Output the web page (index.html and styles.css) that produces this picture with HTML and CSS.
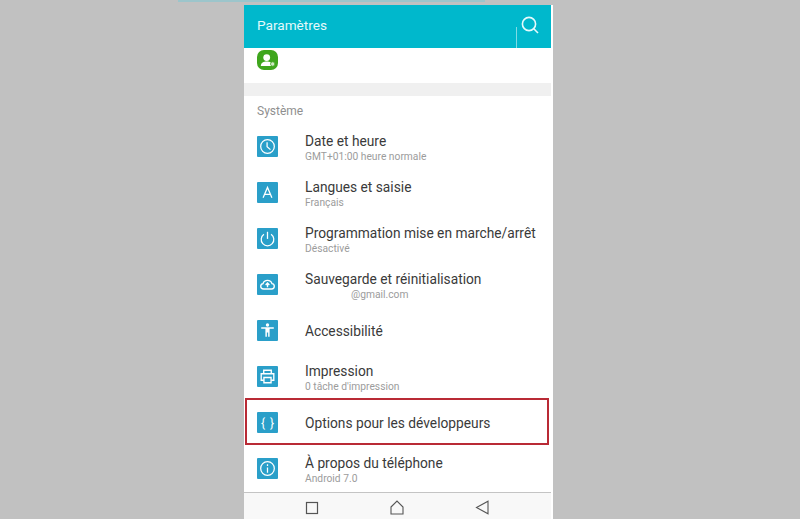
FILE: index.html
```html
<!DOCTYPE html>
<html lang="fr">
<head>
    <meta charset="UTF-8">
    <title>Paramètres</title>
    <link rel="stylesheet" href="styles.css">
</head>
<body>
    <div class="top-line"></div>
    <div class="phone">
        <header class="app-bar">
            <span class="app-title">Paramètres</span>
            <span class="app-seam"></span>
            <svg class="search-icon" width="20" height="20" viewBox="0 0 20 20" fill="none" stroke="#e6fafc" stroke-width="1.6">
                <circle cx="9" cy="9" r="6.6"/>
                <path d="M13.8 13.8 L18 18"/>
            </svg>
        </header>
        <div class="account-row">
            <span class="account-icon">
                <svg width="21" height="20" viewBox="0 0 21 20">
                    <circle cx="9.7" cy="7.6" r="3.4" fill="#fff"/>
                    <path d="M3.8 16 C4 12.6 6.6 11.6 9.7 11.6 C12.8 11.6 15.4 12.6 15.6 16 Z" fill="#fff"/>
                    <circle cx="15.7" cy="14" r="2.2" fill="#cfe9c4" stroke="#3fa61d" stroke-width="0.8"/>
                </svg>
            </span>
        </div>
        <div class="band"></div>
        <div class="section-title">Système</div>

        <div class="row">
            <span class="row-icon">
                <svg width="21" height="21" viewBox="0 0 20 20" fill="none" stroke="#fff" stroke-width="1.2">
                    <circle cx="10" cy="10" r="6.5"/>
                    <path d="M9.6 6 V10.2 L12.8 13"/>
                </svg>
            </span>
            <div class="row-text">
                <div class="row-title">Date et heure</div>
                <div class="row-sub">GMT+01:00 heure normale</div>
            </div>
        </div>
        <div class="row">
            <span class="row-icon">
                <svg width="21" height="21" viewBox="0 0 20 20" fill="none" stroke="#fff" stroke-width="1.2">
                    <path d="M5.8 15 L10 5.2 L14.2 15 M7.2 11.8 H12.8"/>
                </svg>
            </span>
            <div class="row-text">
                <div class="row-title">Langues et saisie</div>
                <div class="row-sub">Français</div>
            </div>
        </div>
        <div class="row">
            <span class="row-icon">
                <svg width="21" height="21" viewBox="0 0 20 20" fill="none" stroke="#fff" stroke-width="1.2">
                    <path d="M6.6 6 A6 6 0 1 0 13.4 6"/>
                    <path d="M10 3.6 V10.4"/>
                </svg>
            </span>
            <div class="row-text">
                <div class="row-title">Programmation mise en marche/arrêt</div>
                <div class="row-sub">Désactivé</div>
            </div>
        </div>
        <div class="row">
            <span class="row-icon">
                <svg width="21" height="21" viewBox="0 0 20 20" fill="none" stroke="#fff" stroke-width="1.5">
                    <g transform="translate(1.5 1.5) scale(.85)">
                        <path d="M5.6 15 C3.4 15 2.4 13.4 2.4 12 C2.4 10.4 3.6 9.2 5 9 C5.6 6.8 7.6 5.4 10 5.4 C12.6 5.4 14.4 7 15 9 C16.6 9.2 17.6 10.4 17.6 12 C17.6 13.6 16.4 15 14.6 15 Z"/>
                        <path d="M10 13.2 V8.6 M7.9 10.6 L10 8.4 L12.1 10.6"/>
                    </g>
                </svg>
            </span>
            <div class="row-text">
                <div class="row-title">Sauvegarde et réinitialisation</div>
                <div class="row-sub row-sub-mail">@gmail.com</div>
            </div>
        </div>
        <div class="row">
            <span class="row-icon">
                <svg width="21" height="21" viewBox="0 0 20 20" fill="#fff">
                    <circle cx="10" cy="4.8" r="1.6"/>
                    <path d="M4 7 H16 V8.4 H12 V16 H10.6 V12 H9.4 V16 H8 V8.4 H4 Z"/>
                </svg>
            </span>
            <div class="row-text">
                <div class="row-title">Accessibilité</div>
            </div>
        </div>
        <div class="row">
            <span class="row-icon">
                <svg width="21" height="21" viewBox="0 0 20 20" fill="none" stroke="#fff" stroke-width="1.3">
                    <path d="M6.4 7 V4 H13.6 V7"/>
                    <path d="M6.4 13.6 H4 V7.4 H16 V13.6 H13.6"/>
                    <path d="M6.6 11 H13.4 V16 H6.6 Z"/>
                </svg>
            </span>
            <div class="row-text">
                <div class="row-title">Impression</div>
                <div class="row-sub">0 tâche d'impression</div>
            </div>
        </div>
        <div class="row">
            <span class="row-icon row-icon-text">{ }</span>
            <div class="row-text">
                <div class="row-title">Options pour les développeurs</div>
            </div>
            <span class="marker"></span>
        </div>
        <div class="row">
            <span class="row-icon">
                <svg width="21" height="21" viewBox="0 0 20 20" fill="none" stroke="#fff" stroke-width="1.2">
                    <circle cx="10" cy="10" r="6.5"/>
                    <path d="M10 9 V14 M10 6 V7.6"/>
                </svg>
            </span>
            <div class="row-text">
                <div class="row-title">À propos du téléphone</div>
                <div class="row-sub">Android 7.0</div>
            </div>
        </div>

        <nav class="nav-bar">
            <svg width="14" height="14" viewBox="0 0 14 14" fill="none" stroke="#555" stroke-width="1.2">
                <rect x="1.5" y="1.5" width="11" height="11"/>
            </svg>
            <svg width="16" height="15" viewBox="0 0 16 15" fill="none" stroke="#555" stroke-width="1.1">
                <path d="M2 7 L8 1 L14 7 V14 H2 Z"/>
            </svg>
            <svg width="14" height="15" viewBox="0 0 14 15" fill="none" stroke="#555" stroke-width="1.1">
                <path d="M13 1.2 V13.8 L1.5 7.5 Z"/>
            </svg>
        </nav>
    </div>
</body>
</html>
```

FILE: styles.css
```css
html, body {
    height: 519px;
    overflow: hidden;
}
body {
    margin: 0;
    background: #c1c1c1;
    font-family: Roboto, "Liberation Sans", sans-serif;
}
.top-line {
    width: 307px;
    height: 2px;
    margin-left: 178px;
    background: #9cc5cb;
}
.phone {
    position: relative;
    width: 307px;
    height: 514px;
    margin: 3px 0 0 244px;
    padding-right: 2px;
    background: #fff;
}
.app-bar {
    position: relative;
    display: flex;
    align-items: center;
    justify-content: space-between;
    height: 39px;
    padding: 0 11px 4px 13px;
    background: #00b8cc;
}
.app-title {
    font-size: 13.6px;
    color: #e4f9fb;
}
.app-seam {
    position: absolute;
    left: 272px;
    top: 22px;
    width: 1px;
    height: 21px;
    background: #7fdbe5;
}
.search-icon {
    margin-top: 1px;
}
.account-row {
    height: 35px;
    box-sizing: border-box;
    padding: 2px 0 0 13px;
}
.account-icon {
    display: block;
    width: 21px;
    height: 20px;
    border-radius: 7px;
    background: #3fa61d;
}
.account-icon svg {
    display: block;
}
.band {
    height: 13px;
    background: #f0f0f0;
}
.section-title {
    height: 28px;
    padding: 8px 0 0 13px;
    box-sizing: border-box;
    font-size: 12px;
    line-height: 14px;
    color: #8f8f8f;
}
.row {
    position: relative;
    display: flex;
    align-items: center;
    height: 46px;
    padding-left: 13px;
}
.row-icon {
    display: flex;
    align-items: center;
    justify-content: center;
    width: 21px;
    height: 21px;
    margin: 0 27px 1px 0;
    border-radius: 1px;
    background: #2a9fc9;
}
.row-icon-text {
    font-size: 12px;
    word-spacing: 2px;
    color: #fff;
}
.row-title {
    font-size: 13.75px;
    line-height: 17px;
    color: #3a3a3a;
}
.row-sub {
    font-size: 10.25px;
    line-height: 13px;
    margin-bottom: -2px;
    color: #9c9c9c;
}
.row-sub-mail {
    padding-left: 46px;
}
.marker {
    position: absolute;
    left: 1px;
    top: -2px;
    width: 304px;
    height: 47px;
    box-sizing: border-box;
    border: 2px solid #b92a35;
}
.nav-bar {
    display: flex;
    align-items: center;
    justify-content: space-between;
    height: 23px;
    padding: 3px 62px 0 61px;
    border-top: 1px solid #c4c4c4;
    background: #f8f8f8;
}
```
